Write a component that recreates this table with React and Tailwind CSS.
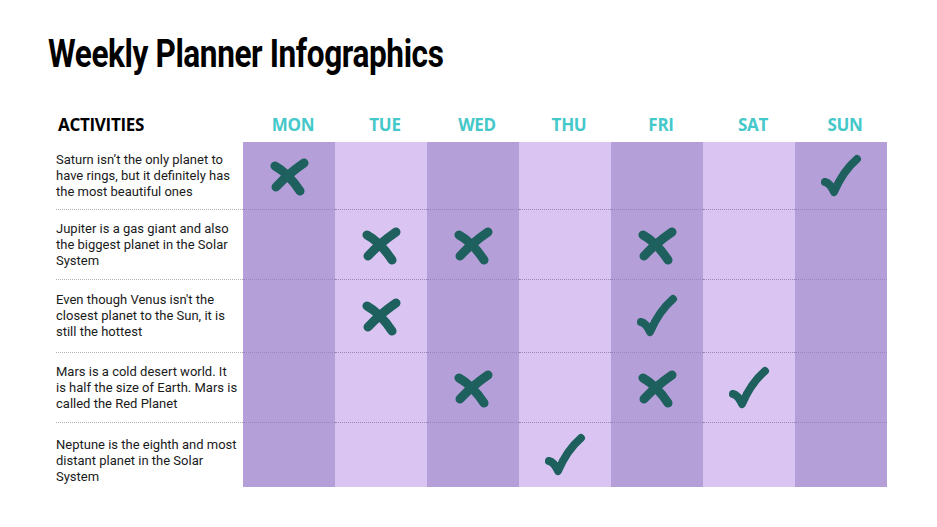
const days = ["MON", "TUE", "WED", "THU", "FRI", "SAT", "SUN"];

const rows = [
  {
    lines: ["Saturn isn’t the only planet to", "have rings, but it definitely has", "the most beautiful ones"],
    h: "h-[68px]",
    marks: { MON: "x", SUN: "check" },
  },
  {
    lines: ["Jupiter is a gas giant and also", "the biggest planet in the Solar", "System"],
    h: "h-[70px]",
    marks: { TUE: "x", WED: "x", FRI: "x" },
  },
  {
    lines: ["Even though Venus isn't the", "closest planet to the Sun, it is", "still the hottest"],
    h: "h-[73px]",
    marks: { TUE: "x", FRI: "check" },
  },
  {
    lines: ["Mars is a cold desert world. It", "is half the size of Earth. Mars is", "called the Red Planet"],
    h: "h-[70px]",
    marks: { WED: "x", FRI: "x", SAT: "check" },
  },
  {
    lines: ["Neptune is the eighth and most", "distant planet in the Solar", "System"],
    h: "h-[64px]",
    marks: { THU: "check" },
    last: true,
  },
];

function Cross() {
  return (
    <svg width="42" height="42" viewBox="0 0 42 42" fill="none">
      <path d="M7 11 Q20 18 32 36" stroke="#1e605e" strokeWidth="9" strokeLinecap="round" />
      <path d="M36 8 Q20 19 8 32" stroke="#1e605e" strokeWidth="9" strokeLinecap="round" />
    </svg>
  );
}

function Check() {
  return (
    <svg width="42" height="46" viewBox="0 0 42 46" fill="none">
      <path
        d="M5 29 Q10 30 14 39 Q23 18 37 6"
        stroke="#1e605e"
        strokeWidth="8"
        strokeLinecap="round"
        strokeLinejoin="round"
      />
    </svg>
  );
}

export default function App() {
  return (
    <div className="w-[937px] h-[527px] bg-white overflow-hidden">
      <div className="pl-[48px] pt-[30px] h-[108px]">
        <h1 className="inline-block origin-left scale-x-[0.81] font-['Roboto',sans-serif] font-bold text-[39px] leading-[48px] text-black whitespace-nowrap tracking-[-0.5px]">
          Weekly Planner Infographics
        </h1>
      </div>

      <div className="pl-[56px]">
        {/* header */}
        <div className="flex h-[34px] items-center">
          <div className="w-[187px] pl-[2px] font-['Open_Sans',sans-serif] font-bold text-[17px] text-black tracking-[-0.3px]">
            ACTIVITIES
          </div>
          {days.map((d) => (
            <div
              key={d}
              className="w-[92px] pl-[8px] text-center font-['Open_Sans',sans-serif] font-bold text-[17px] text-[#45c8c9] tracking-[-0.3px]"
            >
              {d}
            </div>
          ))}
        </div>

        {/* rows */}
        {rows.map((r, i) => (
          <div key={i} className={`flex ${r.h}`}>
            <div
              className={`w-[187px] flex ${
                r.last ? "items-start pt-[14px]" : "items-center border-b border-dotted border-[#b4afbb]"
              }`}
            >
              <p className="font-['Roboto',sans-serif] text-[13px] leading-[16px] text-[#1a1a1a] whitespace-nowrap">
                {r.lines.map((l, k) => (
                  <span key={k} className="block">
                    {l}
                  </span>
                ))}
              </p>
            </div>
            {days.map((d, j) => (
              <div
                key={d}
                className={`w-[92px] flex items-center justify-center ${
                  j % 2 === 0 ? "bg-[#b49fd8]" : "bg-[#dac5f2]"
                } ${r.last ? "" : "border-b border-dotted border-[#9a86bc]"}`}
              >
                {r.marks[d] === "x" && <Cross />}
                {r.marks[d] === "check" && <Check />}
              </div>
            ))}
          </div>
        ))}
      </div>
    </div>
  );
}
